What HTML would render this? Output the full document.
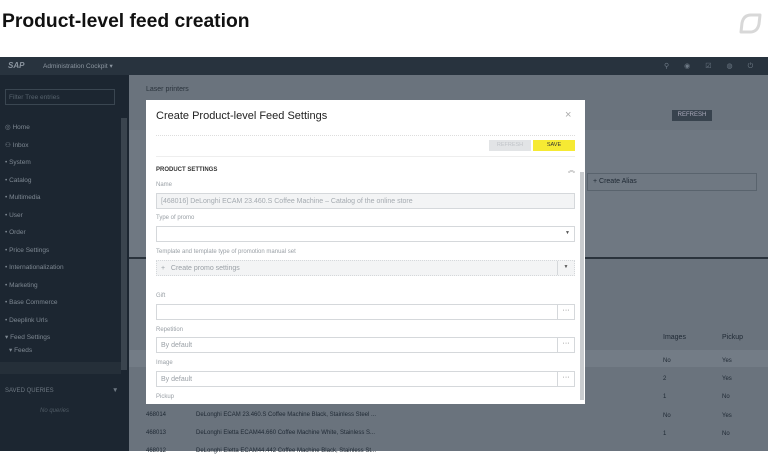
<!DOCTYPE html><html><head><style>
*{box-sizing:border-box;margin:0;padding:0}
body{width:768px;height:451px;overflow:hidden;background:#fff;font-family:"Liberation Sans",sans-serif;position:relative}
.a{position:absolute}
.m{font-size:6.5px;color:#c8cdd2;white-space:nowrap}
.lbl{font-size:6px;color:#9aa0a6;position:absolute;left:156px}
.inp{position:absolute;left:156px;width:419px;height:16px;border:1px solid #d5d8db;background:#fff;font-size:7px;color:#9aa0a6;padding:4px 4px}
.dots{position:absolute;right:0;top:0;width:17px;height:14px;border-left:1px solid #d5d8db;font-size:7px;text-align:center;line-height:12px;color:#666}
.r{font-size:6px;color:#1e2833;white-space:nowrap}
</style></head><body>
<div class="a" style="left:2px;top:11px;font-size:19.3px;font-weight:bold;color:#111">Product-level feed creation</div>
<svg class="a" style="left:736px;top:12px" width="28" height="24" viewBox="0 0 28 24"><path d="M5 20 L6 11 C7 6 10 3 15 3 L24 3 L23 12 C22 17 19 20 14 20 Z" fill="none" stroke="#d8d8d8" stroke-width="3" stroke-linejoin="round"/></svg>
<div class="a" style="left:0;top:57px;width:768px;height:18px;background:#28333e"></div>
<div class="a" style="left:8px;top:61px;font-size:8px;font-weight:bold;color:#8c96a0;font-style:italic">SAP</div>
<div class="a m" style="left:43px;top:62px;color:#8c96a0">Administration Cockpit ▾</div>
<div class="a" style="left:664px;top:62px;font-size:7px;color:#6e7a86;letter-spacing:15px">⚲◉☑◍⏻</div>
<div class="a" style="left:0;top:75px;width:129px;height:376px;background:#1c2631"></div>
<div class="a" style="left:5px;top:89px;width:110px;height:16px;border:1px solid #3a4651;font-size:6.5px;color:#56626d;padding:4px 3px">Filter Tree entries</div>
<div class="a" style="left:121px;top:118px;width:6px;height:252px;background:#3a444e"></div>
<div class="a m" style="left:5px;top:119px;color:#7e8892;line-height:17.5px;font-size:6.5px">◎ Home<br>⚇ Inbox<br>• System<br>• Catalog<br>• Multimedia<br>• User<br>• Order<br>• Price Settings<br>• Internationalization<br>• Marketing<br>• Base Commerce<br>• Deeplink Urls<br>▾ Feed Settings</div>
<div class="a m" style="left:9px;top:346px;color:#7e8892">▾ Feeds</div>
<div class="a" style="left:0;top:362px;width:121px;height:12px;background:#252f39"></div>
<div class="a m" style="left:5px;top:388px;color:#6e7882;font-size:6px">SAVED QUERIES</div>
<div class="a m" style="left:112px;top:387px;color:#6e7882">▼</div>
<div class="a m" style="left:40px;top:408px;color:#4f5a64;font-style:italic;font-size:6px">No queries</div>
<div class="a" style="left:129px;top:75px;width:639px;height:376px;background:#6a737d"></div>
<div class="a m" style="left:146px;top:86px;color:#2a333c;font-size:7px">Laser printers</div>
<div class="a" style="left:129px;top:130px;width:639px;height:128px;background:#6f7882"></div>
<div class="a" style="left:672px;top:110px;width:40px;height:11px;background:#38434e;font-size:6px;color:#aab;text-align:center;line-height:11px">REFRESH</div>
<div class="a" style="left:587px;top:173px;width:170px;height:18px;border:1px solid #59636d;font-size:7px;color:#1e2833;padding:4px 5px">+ Create Alias</div>
<div class="a" style="left:129px;top:257px;width:639px;height:2px;background:#2a333c"></div>
<div class="a r" style="left:663px;top:334px;font-size:7px">Images</div>
<div class="a r" style="left:722px;top:334px;font-size:7px">Pickup</div>
<div class="a" style="left:129px;top:350px;width:639px;height:17px;background:#737c86"></div>
<div class="a r" style="left:663px;top:352px;line-height:18.2px">No<br>2<br>1<br>No<br>1</div>
<div class="a r" style="left:722px;top:352px;line-height:18.2px">Yes<br>Yes<br>No<br>Yes<br>No</div>
<div class="a r" style="left:146px;top:406px;line-height:18.2px">468014<br>468013<br>468012</div>
<div class="a r" style="left:196px;top:406px;line-height:18.2px">DeLonghi ECAM 23.460.S Coffee Machine Black, Stainless Steel ...<br>DeLonghi Eletta ECAM44.660 Coffee Machine White, Stainless S...<br>DeLonghi Eletta ECAM44.442 Coffee Machine Black, Stainless St...</div>
<div class="a" style="left:146px;top:100px;width:439px;height:304px;background:#fff"></div>
<div class="a" style="left:156px;top:110px;font-size:11px;color:#222">Create Product-level Feed Settings</div>
<div class="a" style="left:565px;top:109px;font-size:11px;color:#aaa">×</div>
<div class="a" style="left:156px;top:135px;width:419px;border-top:1px dotted #ddd"></div>
<div class="a" style="left:489px;top:140px;width:42px;height:11px;background:#e2e4e6;font-size:5.5px;color:#c0c4c8;text-align:center;line-height:11px">REFRESH</div>
<div class="a" style="left:533px;top:140px;width:42px;height:11px;background:#f6ea33;font-size:5.5px;color:#333;text-align:center;line-height:11px">SAVE</div>
<div class="a" style="left:156px;top:156px;width:419px;border-top:1px solid #eee"></div>
<div class="a" style="left:156px;top:167px;font-size:6px;font-weight:bold;color:#333">PRODUCT SETTINGS</div>
<div class="a" style="left:568px;top:165px;font-size:7px;color:#888">︽</div>
<div class="lbl" style="top:182px">Name</div>
<div class="inp" style="top:193px;background:#f3f4f5;color:#a4aab0">[468016] DeLonghi ECAM 23.460.S Coffee Machine – Catalog of the online store</div>
<div class="lbl" style="top:215px">Type of promo</div>
<div class="inp" style="top:226px"><span class="a" style="right:4px;top:3px;font-size:5px;color:#555">▼</span></div>
<div class="lbl" style="top:249px">Template and template type of promotion manual set</div>
<div class="inp" style="top:260px;background:#f3f4f5;border-style:dotted">+ &nbsp; Create promo settings<span class="dots" style="font-size:5px;color:#555">▼</span></div>
<div class="lbl" style="top:293px">Gift</div>
<div class="inp" style="top:304px"><span class="dots">···</span></div>
<div class="lbl" style="top:327px">Repetition</div>
<div class="inp" style="top:337px">By default<span class="dots">···</span></div>
<div class="lbl" style="top:360px">Image</div>
<div class="inp" style="top:371px">By default<span class="dots">···</span></div>
<div class="lbl" style="top:394px">Pickup</div>
<div class="a" style="left:580px;top:172px;width:4px;height:228px;background:#c9cccf"></div>
</body></html>
